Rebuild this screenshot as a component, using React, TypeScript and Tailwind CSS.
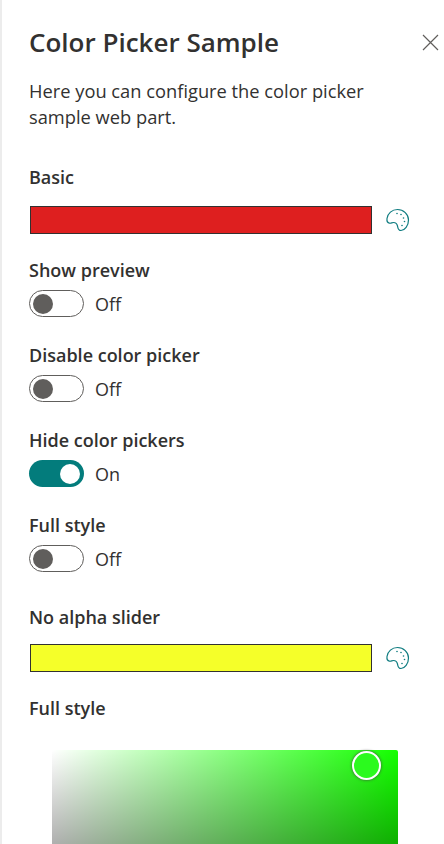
const font = { fontFamily: '"Open Sans", "Noto Sans", sans-serif' };

const PaletteIcon = () => (
  <svg width="26" height="26" viewBox="0 0 26 26" fill="none" stroke="#0f7c80" strokeWidth="1.2" className="shrink-0">
    <path d="M2 11.500C2.600 6.500 7 2.500 12.500 2.500c6 0 11 4.700 11 10.500 0 5.800-3.800 10.500-7.500 10.500-3 0-3-2.200-3.500-4.500-.5-2.300-1.800-3.500-4-3.500-1.700 0-2.200 1-4 .7C3 15.900 1.700 14 2 11.500Z" />
    <g fill="#0f7c80" stroke="none">
      <circle cx="12" cy="6.500" r=".8" />
      <circle cx="16" cy="7.500" r=".8" />
      <circle cx="18.500" cy="11" r=".8" />
      <circle cx="19.500" cy="14.500" r=".8" />
      <circle cx="17" cy="18.500" r=".8" />
    </g>
  </svg>
);

const Toggle = ({ label, on }: { label: string; on?: boolean }) => (
  <div className="ml-[-1px] flex flex-col">
    <div className="text-[18px] font-semibold leading-[24px] text-[#323130]">{label}</div>
    <div className="mt-[8px] flex items-center">
      {on ? (
        <div className="flex h-[27px] w-[55px] items-center justify-end rounded-full bg-[#037c7c] px-[4px]">
          <div className="h-[20px] w-[20px] rounded-full bg-white" />
        </div>
      ) : (
        <div className="flex h-[27px] w-[55px] items-center rounded-full border border-[#605e5c] bg-white px-[3px]">
          <div className="h-[20px] w-[20px] rounded-full bg-[#605e5c]" />
        </div>
      )}
      <span className="ml-[11px] text-[18px] leading-[24px] text-[#323130]">{on ? 'On' : 'Off'}</span>
    </div>
  </div>
);

const ColorRow = ({ color }: { color: string }) => (
  <div className="flex items-center">
    <div className={`h-[28px] w-[342px] border border-[#323130] ${color}`} />
    <div className="ml-[13px]">
      <PaletteIcon />
    </div>
  </div>
);

export default function App() {
  return (
    <div style={font} className="h-[844px] w-[444px] overflow-hidden border-l-2 border-[#ececec] bg-white">
      <div className="pl-[28px] pr-[6px] pt-[24px]">
        <div className="flex items-center justify-between">
          <h1 className="ml-[-1px] text-[26px] font-semibold leading-[36px] text-[#323130]">Color Picker Sample</h1>
          <svg width="17" height="17" viewBox="0 0 17 17" stroke="#605e5c" strokeWidth="1.2" className="mr-[-1px]">
            <path d="M1 1l15 15M16 1L1 16" />
          </svg>
        </div>
        <p className="ml-[-1px] mt-[18px] w-[360px] text-[18.300px] leading-[26px] text-[#323130]">
          Here you can configure the color picker sample web part.
        </p>
        <div className="ml-[-1px] mt-[35px] text-[18px] font-semibold leading-[24px] text-[#323130]">Basic</div>
        <div className="mt-[17px]">
          <ColorRow color="bg-[#de1f1f]" />
        </div>
        <div className="mt-[24px] flex flex-col gap-[26px]">
          <Toggle label="Show preview" />
          <Toggle label="Disable color picker" />
          <Toggle label="Hide color pickers" on />
          <Toggle label="Full style" />
        </div>
        <div className="ml-[-1px] mt-[33px] text-[18px] font-semibold leading-[24px] text-[#323130]">No alpha slider</div>
        <div className="mt-[15px]">
          <ColorRow color="bg-[#f5ff29]" />
        </div>
        <div className="ml-[-1px] mt-[24px] text-[18px] font-semibold leading-[24px] text-[#323130]">Full style</div>
        <div className="relative ml-[22px] mt-[30px] h-[300px] w-[346px] rounded-[2px] bg-[#14ff00] bg-[linear-gradient(to_bottom,transparent,#000),linear-gradient(to_right,#fff,transparent)]">
          <div className="absolute left-[300px] top-[1px] h-[29px] w-[29px] rounded-full border-2 border-white bg-[#2bfa1e] shadow-[0_0_3px_#444]" />
        </div>
      </div>
    </div>
  );
}
